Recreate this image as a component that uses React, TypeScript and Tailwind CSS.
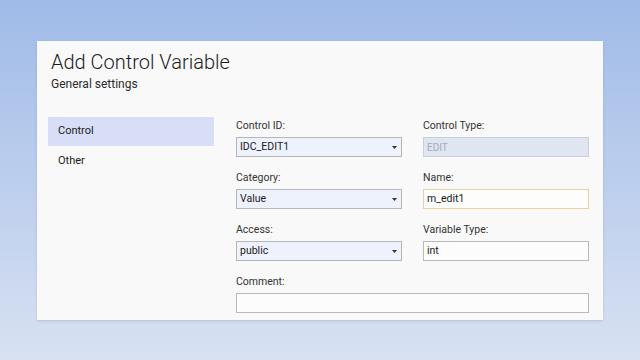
export default function App() {
  const font = { fontFamily: 'Roboto, "Noto Sans", sans-serif' };

  return (
    <div className="w-[640px] h-[360px] bg-gradient-to-b from-[#a0bbe8] to-[#d8e1f2] pt-[41px] pl-[37px]" style={font}>
      <div className="w-[566px] h-[279px] overflow-hidden bg-[#f9f9f9] shadow-sm pt-[9px] pl-[14px]">
        <h1 className="text-[20px] leading-[24px] font-light text-[#1b1b1b]">Add Control Variable</h1>
        <p className="text-[12px] leading-[16px] text-[#2b2b2b] mt-[2px]">General settings</p>

        <div className="flex mt-[25px] -ml-[3px]">
          <nav className="w-[166px] flex flex-col">
            <div className="h-[29px] flex items-center pl-[10px] bg-[#d7def6] text-[11px] text-[#1b1b1b]">Control</div>
            <div className="h-[30px] flex items-center pl-[10px] text-[11px] text-[#1b1b1b]">Other</div>
          </nav>

          <div className="ml-[22px] grid grid-cols-[166px_166px] gap-x-[21px] pt-[2px]">
            <Field label="Control ID:">
              <Dropdown value="IDC_EDIT1" />
            </Field>
            <Field label="Control Type:">
              <div className="h-[20px] bg-[#dfe5f1] border border-[#c9d0dd] flex items-center pl-[3px] text-[10px] text-[#a3abba]">EDIT</div>
            </Field>
            <Field label="Category:">
              <Dropdown value="Value" />
            </Field>
            <Field label="Name:">
              <div className="h-[20px] bg-[#fdfdfb] border border-[#e5d4a2] flex items-center pl-[3px] text-[10.5px] text-[#1b1b1b]">m_edit1</div>
            </Field>
            <Field label="Access:">
              <Dropdown value="public" />
            </Field>
            <Field label="Variable Type:">
              <div className="h-[20px] bg-[#fcfcfc] border border-[#b9b9b9] flex items-center pl-[3px] text-[10.5px] text-[#1b1b1b]">int</div>
            </Field>
            <div className="col-span-2">
              <Field label="Comment:">
                <div className="h-[20px] bg-[#fcfcfc] border border-[#b9b9b9]" />
              </Field>
            </div>
          </div>
        </div>
      </div>
    </div>
  );
}

function Field({ label, children }: { label: string; children: React.ReactNode }) {
  return (
    <div className="pb-[14px]">
      <div className="text-[10.5px] leading-[14px] text-[#333] mb-[4px]">{label}</div>
      {children}
    </div>
  );
}

function Dropdown({ value }: { value: string }) {
  return (
    <div className="h-[20px] bg-[#eef2fc] border border-[#b6b6b6] flex items-center justify-between pl-[3px] pr-[4px] text-[10.5px] text-[#1b1b1b]">
      <span>{value}</span>
      <svg width="5" height="3" viewBox="0 0 5 3">
        <path d="M0 0h5L2.5 3z" fill="#333" />
      </svg>
    </div>
  );
}
